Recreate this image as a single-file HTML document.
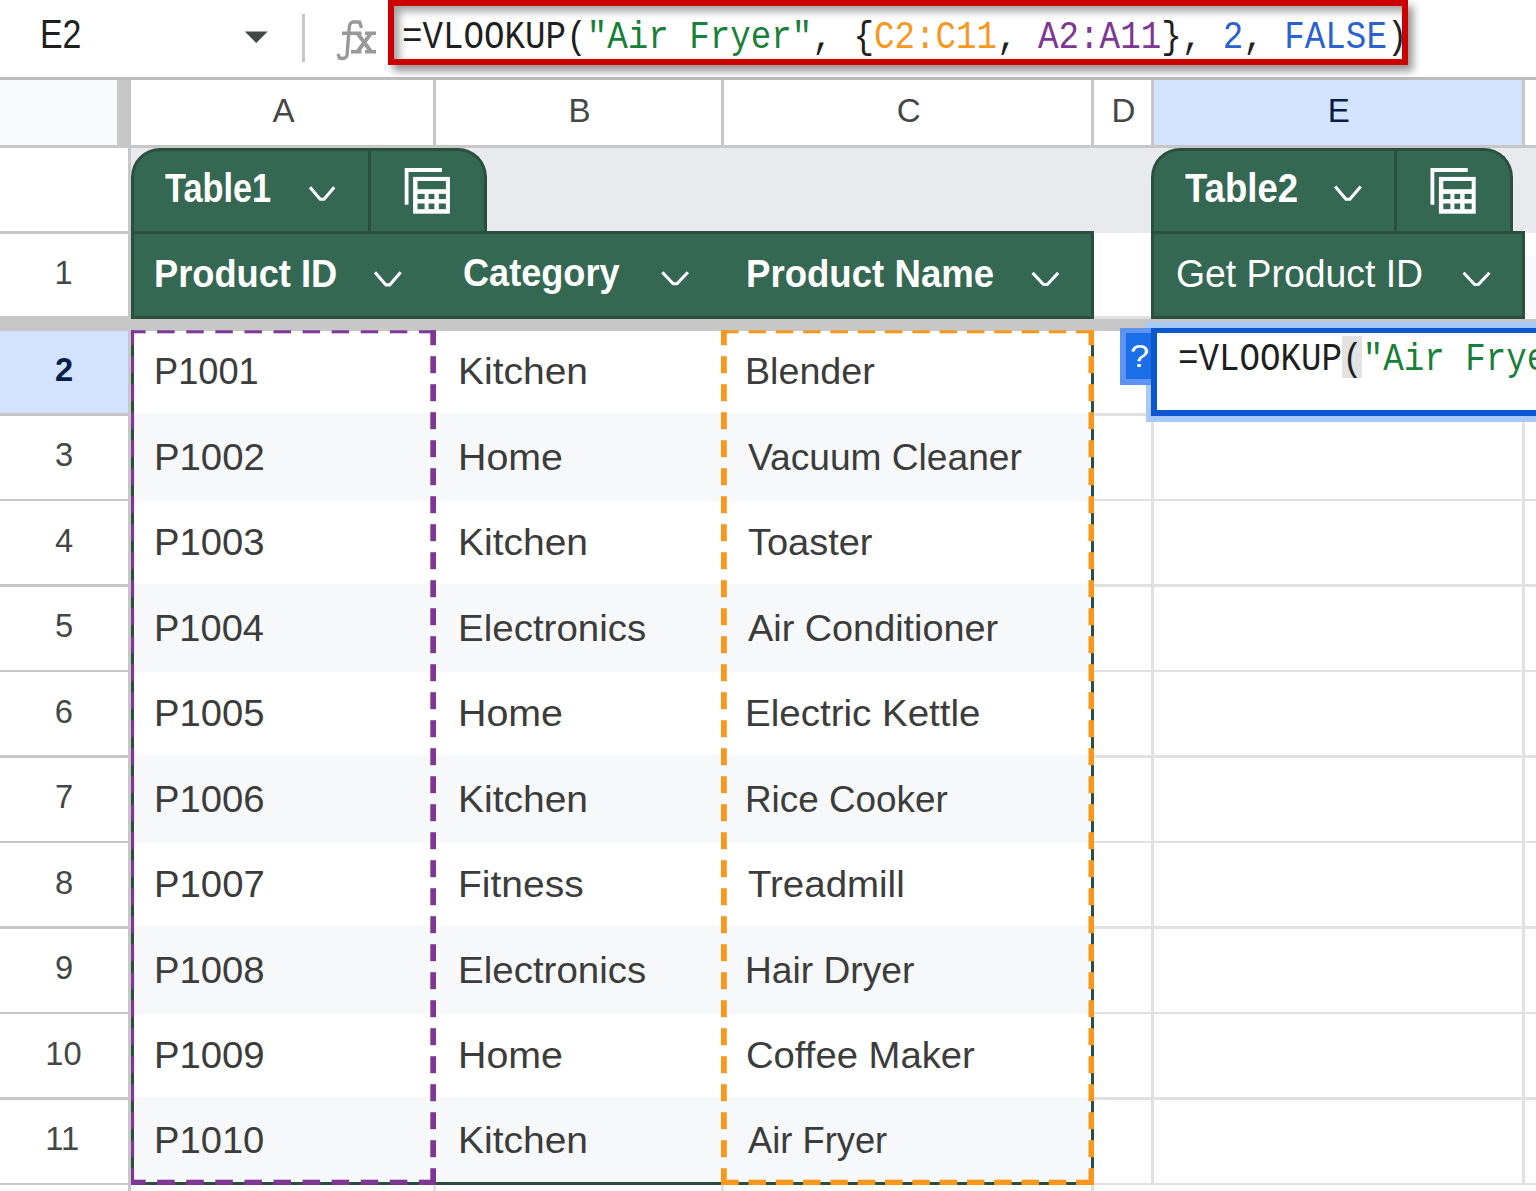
<!DOCTYPE html><html><head><meta charset="utf-8"><style>
html,body{margin:0;padding:0;background:#fff;width:1536px;height:1191px;overflow:hidden;position:relative}
body>div,body>svg{position:absolute}
.t{white-space:pre}
</style></head><body>
<div style="left:0.00px;top:80.00px;width:117.00px;height:65.00px;background:#f8f9fa;"></div>
<div style="left:1154.00px;top:80.00px;width:368.00px;height:65.00px;background:#d3e3fd;"></div>
<div style="left:0.00px;top:77.00px;width:1536.00px;height:3.00px;background:#bdbdbd;"></div>
<div style="left:0.00px;top:145.00px;width:1536.00px;height:3.00px;background:#c7c7c7;"></div>
<div style="left:117.00px;top:80.00px;width:14.00px;height:65.00px;background:#c7c7c7;"></div>
<div style="left:433.00px;top:80.00px;width:3.00px;height:65.00px;background:#c7c7c7;"></div>
<div style="left:721.00px;top:80.00px;width:3.00px;height:65.00px;background:#c7c7c7;"></div>
<div style="left:1091.00px;top:80.00px;width:3.00px;height:65.00px;background:#c7c7c7;"></div>
<div style="left:1151.00px;top:80.00px;width:3.00px;height:65.00px;background:#c7c7c7;"></div>
<div style="left:1522.00px;top:80.00px;width:3.00px;height:65.00px;background:#c7c7c7;"></div>
<div class="t" style="left:272.46px;top:94.37px;font:normal 400 33.10px/33.10px 'Liberation Sans', sans-serif;color:#444746;">A</div>
<div class="t" style="left:568.48px;top:94.37px;font:normal 400 33.10px/33.10px 'Liberation Sans', sans-serif;color:#444746;">B</div>
<div class="t" style="left:896.84px;top:94.37px;font:normal 400 33.10px/33.10px 'Liberation Sans', sans-serif;color:#444746;">C</div>
<div class="t" style="left:1111.48px;top:94.37px;font:normal 400 33.10px/33.10px 'Liberation Sans', sans-serif;color:#444746;">D</div>
<div class="t" style="left:1327.81px;top:94.37px;font:normal 400 33.10px/33.10px 'Liberation Sans', sans-serif;color:#041e49;">E</div>
<div style="left:128.00px;top:148.00px;width:3.00px;height:1043.00px;background:#c7c7c7;"></div>
<div style="left:0.00px;top:330.50px;width:128.00px;height:82.50px;background:#d3e3fd;"></div>
<div style="left:0.00px;top:231.00px;width:128.00px;height:3.00px;background:#c7c7c7;"></div>
<div style="left:0.00px;top:316.00px;width:128.00px;height:15.00px;background:#c7c7c7;"></div>
<div style="left:0.00px;top:413.00px;width:128.00px;height:2.70px;background:#c7c7c7;"></div>
<div style="left:0.00px;top:498.50px;width:128.00px;height:2.70px;background:#c7c7c7;"></div>
<div style="left:0.00px;top:584.00px;width:128.00px;height:2.70px;background:#c7c7c7;"></div>
<div style="left:0.00px;top:669.50px;width:128.00px;height:2.70px;background:#c7c7c7;"></div>
<div style="left:0.00px;top:755.00px;width:128.00px;height:2.70px;background:#c7c7c7;"></div>
<div style="left:0.00px;top:840.50px;width:128.00px;height:2.70px;background:#c7c7c7;"></div>
<div style="left:0.00px;top:926.00px;width:128.00px;height:2.70px;background:#c7c7c7;"></div>
<div style="left:0.00px;top:1011.50px;width:128.00px;height:2.70px;background:#c7c7c7;"></div>
<div style="left:0.00px;top:1097.00px;width:128.00px;height:2.70px;background:#c7c7c7;"></div>
<div style="left:0.00px;top:1182.50px;width:128.00px;height:2.70px;background:#c7c7c7;"></div>
<div class="t" style="left:54.46px;top:257.21px;font:normal 400 32.70px/32.70px 'Liberation Sans', sans-serif;color:#444746;">1</div>
<div class="t" style="left:54.99px;top:353.61px;font:normal 700 32.70px/32.70px 'Liberation Sans', sans-serif;color:#041e49;">2</div>
<div class="t" style="left:55.00px;top:439.11px;font:normal 400 32.70px/32.70px 'Liberation Sans', sans-serif;color:#444746;">3</div>
<div class="t" style="left:55.01px;top:524.61px;font:normal 400 32.70px/32.70px 'Liberation Sans', sans-serif;color:#444746;">4</div>
<div class="t" style="left:54.94px;top:610.11px;font:normal 400 32.70px/32.70px 'Liberation Sans', sans-serif;color:#444746;">5</div>
<div class="t" style="left:54.80px;top:695.61px;font:normal 400 32.70px/32.70px 'Liberation Sans', sans-serif;color:#444746;">6</div>
<div class="t" style="left:54.89px;top:781.11px;font:normal 400 32.70px/32.70px 'Liberation Sans', sans-serif;color:#444746;">7</div>
<div class="t" style="left:54.91px;top:866.61px;font:normal 400 32.70px/32.70px 'Liberation Sans', sans-serif;color:#444746;">8</div>
<div class="t" style="left:54.91px;top:952.11px;font:normal 400 32.70px/32.70px 'Liberation Sans', sans-serif;color:#444746;">9</div>
<div class="t" style="left:45.21px;top:1037.61px;font:normal 400 32.70px/32.70px 'Liberation Sans', sans-serif;color:#444746;">10</div>
<div class="t" style="left:45.37px;top:1123.11px;font:normal 400 32.70px/32.70px 'Liberation Sans', sans-serif;color:#444746;">11</div>
<div style="left:1094.00px;top:413.00px;width:442.00px;height:2.70px;background:#e1e1e1;"></div>
<div style="left:1094.00px;top:498.50px;width:442.00px;height:2.70px;background:#e1e1e1;"></div>
<div style="left:1094.00px;top:584.00px;width:442.00px;height:2.70px;background:#e1e1e1;"></div>
<div style="left:1094.00px;top:669.50px;width:442.00px;height:2.70px;background:#e1e1e1;"></div>
<div style="left:1094.00px;top:755.00px;width:442.00px;height:2.70px;background:#e1e1e1;"></div>
<div style="left:1094.00px;top:840.50px;width:442.00px;height:2.70px;background:#e1e1e1;"></div>
<div style="left:1094.00px;top:926.00px;width:442.00px;height:2.70px;background:#e1e1e1;"></div>
<div style="left:1094.00px;top:1011.50px;width:442.00px;height:2.70px;background:#e1e1e1;"></div>
<div style="left:1094.00px;top:1097.00px;width:442.00px;height:2.70px;background:#e1e1e1;"></div>
<div style="left:1094.00px;top:1182.50px;width:442.00px;height:2.70px;background:#e1e1e1;"></div>
<div style="left:1151.00px;top:330.00px;width:3.00px;height:861.00px;background:#e1e1e1;"></div>
<div style="left:1522.00px;top:330.00px;width:3.00px;height:861.00px;background:#e1e1e1;"></div>
<div style="left:131.00px;top:1185.00px;width:1405.00px;height:6.00px;background:#fff;"></div>
<div style="left:433.00px;top:1185.00px;width:3.00px;height:6.00px;background:#e1e1e1;"></div>
<div style="left:721.00px;top:1185.00px;width:3.00px;height:6.00px;background:#e1e1e1;"></div>
<div style="left:1091.00px;top:1185.00px;width:3.00px;height:6.00px;background:#e1e1e1;"></div>
<div style="left:131.00px;top:148.00px;width:1405.00px;height:85.00px;background:#e8eaed;"></div>
<div style="left:1094.00px;top:233.00px;width:57.00px;height:83.00px;background:#fff;"></div>
<div style="left:1094.00px;top:316.00px;width:57.00px;height:3.00px;background:#e1e1e1;"></div>
<div style="left:1525.00px;top:233.00px;width:11.00px;height:23.00px;background:#fff;"></div>
<div style="left:1525.00px;top:256.00px;width:11.00px;height:62.00px;background:#f8f9fa;"></div>
<div style="left:0.00px;top:318.50px;width:1536.00px;height:12.00px;background:#c7c7c7;"></div>
<div style="left:131px;top:148px;width:350px;height:80px;background:#356853;border:3px solid #2a4f3f;border-bottom:none;border-radius:29px 29px 0 0"></div>
<div style="left:368.00px;top:151.00px;width:3.00px;height:80.00px;background:#2a4f3f;"></div>
<div style="left:131.00px;top:231.00px;width:963.00px;height:88.00px;background:#2a4f3f;"></div>
<div style="left:134.00px;top:234.00px;width:957.00px;height:82.00px;background:#356853;"></div>
<div style="left:131.00px;top:330.50px;width:963.00px;height:854.50px;background:#2a4f3f;"></div>
<div style="left:134.00px;top:330.50px;width:957.00px;height:851.50px;background:#fff;"></div>
<div style="left:134.00px;top:413.00px;width:957.00px;height:88.30px;background:#f6f8fa;"></div>
<div style="left:134.00px;top:584.00px;width:957.00px;height:88.30px;background:#f6f8fa;"></div>
<div style="left:134.00px;top:755.00px;width:957.00px;height:88.30px;background:#f6f8fa;"></div>
<div style="left:134.00px;top:926.00px;width:957.00px;height:88.30px;background:#f6f8fa;"></div>
<div style="left:134.00px;top:1097.00px;width:957.00px;height:85.00px;background:#f6f8fa;"></div>
<div style="left:1151px;top:148px;width:356px;height:80px;background:#356853;border:3px solid #2a4f3f;border-bottom:none;border-radius:29px 29px 0 0"></div>
<div style="left:1393.50px;top:151.00px;width:3.00px;height:80.00px;background:#2a4f3f;"></div>
<div style="left:1151.00px;top:231.00px;width:374.00px;height:87.50px;background:#2a4f3f;"></div>
<div style="left:1154.00px;top:234.00px;width:368.00px;height:81.50px;background:#356853;"></div>
<div class="t" style="left:165.41px;top:167.55px;font:normal 700 40.80px/40.80px 'Liberation Sans', sans-serif;color:#ffffff;transform:scale(0.8413,1.0000);transform-origin:0 34.55px;">Table1</div>
<div class="t" style="left:1184.79px;top:167.75px;font:normal 700 40.80px/40.80px 'Liberation Sans', sans-serif;color:#ffffff;transform:scale(0.8957,1.0000);transform-origin:0 34.55px;">Table2</div>
<div class="t" style="left:154.08px;top:255.29px;font:normal 700 38.40px/38.40px 'Liberation Sans', sans-serif;color:#ffffff;transform:scale(0.9439,1.0000);transform-origin:0 32.51px;">Product ID</div>
<div class="t" style="left:462.92px;top:254.49px;font:normal 700 38.40px/38.40px 'Liberation Sans', sans-serif;color:#ffffff;transform:scale(0.9407,1.0000);transform-origin:0 32.51px;">Category</div>
<div class="t" style="left:746.45px;top:255.09px;font:normal 700 38.40px/38.40px 'Liberation Sans', sans-serif;color:#ffffff;transform:scale(0.9534,1.0000);transform-origin:0 32.51px;">Product Name</div>
<div class="t" style="left:1175.82px;top:255.09px;font:normal 400 38.40px/38.40px 'Liberation Sans', sans-serif;color:#ffffff;transform:scale(0.9732,1.0000);transform-origin:0 32.51px;">Get Product ID</div>
<svg style="left:0;top:0" width="1536" height="1191" viewBox="0 0 1536 1191"><polyline points="310.0,187.3 320.2,199.2 324.0,199.2 334.2,187.3" fill="none" stroke="#fff" stroke-width="3.1" stroke-linecap="butt" stroke-linejoin="round"/><polyline points="1335.2,186.6 1346.0,199.2 1349.8,199.2 1360.7,186.6" fill="none" stroke="#fff" stroke-width="3.1" stroke-linecap="butt" stroke-linejoin="round"/><polyline points="375.0,272.3 385.9,284.9 389.7,284.9 400.6,272.3" fill="none" stroke="#fff" stroke-width="3.1" stroke-linecap="butt" stroke-linejoin="round"/><polyline points="662.3,272.2 673.2,283.7 677.0,283.7 687.9,272.2" fill="none" stroke="#fff" stroke-width="3.1" stroke-linecap="butt" stroke-linejoin="round"/><polyline points="1032.6,272.9 1043.5,284.5 1047.3,284.5 1058.2,272.9" fill="none" stroke="#fff" stroke-width="3.1" stroke-linecap="butt" stroke-linejoin="round"/><polyline points="1463.6,272.7 1474.6,284.5 1478.4,284.5 1489.4,272.7" fill="none" stroke="#fff" stroke-width="3.1" stroke-linecap="butt" stroke-linejoin="round"/><polyline points="406.6,204.8 406.6,170 441.9,170" fill="none" stroke="#fff" stroke-width="3.8"/><rect x="413.1" y="176.9" width="36.8" height="36.8" fill="#fff"/><rect x="417.5" y="181" width="28.4" height="8.2" fill="#356853"/><rect x="417.5" y="193.9" width="7.1" height="5.2" fill="#356853"/><rect x="417.5" y="203.5" width="7.1" height="5.7" fill="#356853"/><rect x="428.6" y="193.9" width="5.8" height="5.2" fill="#356853"/><rect x="428.6" y="203.5" width="5.8" height="5.7" fill="#356853"/><rect x="438.8" y="193.9" width="7.1" height="5.2" fill="#356853"/><rect x="438.8" y="203.5" width="7.1" height="5.7" fill="#356853"/><polyline points="1432.4,204.8 1432.4,170 1467.7,170" fill="none" stroke="#fff" stroke-width="3.8"/><rect x="1438.9" y="176.9" width="36.8" height="36.8" fill="#fff"/><rect x="1443.3" y="181" width="28.4" height="8.2" fill="#356853"/><rect x="1443.3" y="193.9" width="7.1" height="5.2" fill="#356853"/><rect x="1443.3" y="203.5" width="7.1" height="5.7" fill="#356853"/><rect x="1454.4" y="193.9" width="5.8" height="5.2" fill="#356853"/><rect x="1454.4" y="203.5" width="5.8" height="5.7" fill="#356853"/><rect x="1464.6" y="193.9" width="7.1" height="5.2" fill="#356853"/><rect x="1464.6" y="203.5" width="7.1" height="5.7" fill="#356853"/><rect x="131" y="330.30" width="3.10" height="14.90" fill="#7e3794"/><rect x="131" y="356.20" width="3.10" height="17.00" fill="#7e3794"/><rect x="131" y="384.20" width="3.10" height="17.00" fill="#7e3794"/><rect x="131" y="412.20" width="3.10" height="17.00" fill="#7e3794"/><rect x="131" y="440.20" width="3.10" height="17.00" fill="#7e3794"/><rect x="131" y="468.20" width="3.10" height="17.00" fill="#7e3794"/><rect x="131" y="496.20" width="3.10" height="17.00" fill="#7e3794"/><rect x="131" y="524.20" width="3.10" height="17.00" fill="#7e3794"/><rect x="131" y="552.20" width="3.10" height="17.00" fill="#7e3794"/><rect x="131" y="580.20" width="3.10" height="17.00" fill="#7e3794"/><rect x="131" y="608.20" width="3.10" height="17.00" fill="#7e3794"/><rect x="131" y="636.20" width="3.10" height="17.00" fill="#7e3794"/><rect x="131" y="664.20" width="3.10" height="17.00" fill="#7e3794"/><rect x="131" y="692.20" width="3.10" height="17.00" fill="#7e3794"/><rect x="131" y="720.20" width="3.10" height="17.00" fill="#7e3794"/><rect x="131" y="748.20" width="3.10" height="17.00" fill="#7e3794"/><rect x="131" y="776.20" width="3.10" height="17.00" fill="#7e3794"/><rect x="131" y="804.20" width="3.10" height="17.00" fill="#7e3794"/><rect x="131" y="832.20" width="3.10" height="17.00" fill="#7e3794"/><rect x="131" y="860.20" width="3.10" height="17.00" fill="#7e3794"/><rect x="131" y="888.20" width="3.10" height="17.00" fill="#7e3794"/><rect x="131" y="916.20" width="3.10" height="17.00" fill="#7e3794"/><rect x="131" y="944.20" width="3.10" height="17.00" fill="#7e3794"/><rect x="131" y="972.20" width="3.10" height="17.00" fill="#7e3794"/><rect x="131" y="1000.20" width="3.10" height="17.00" fill="#7e3794"/><rect x="131" y="1028.20" width="3.10" height="17.00" fill="#7e3794"/><rect x="131" y="1056.20" width="3.10" height="17.00" fill="#7e3794"/><rect x="131" y="1084.20" width="3.10" height="17.00" fill="#7e3794"/><rect x="131" y="1112.20" width="3.10" height="17.00" fill="#7e3794"/><rect x="131" y="1140.20" width="3.10" height="17.00" fill="#7e3794"/><rect x="131" y="1168.20" width="3.10" height="16.80" fill="#7e3794"/><rect x="430.3" y="330.30" width="5.70" height="14.90" fill="#7e3794"/><rect x="430.3" y="356.20" width="5.70" height="17.00" fill="#7e3794"/><rect x="430.3" y="384.20" width="5.70" height="17.00" fill="#7e3794"/><rect x="430.3" y="412.20" width="5.70" height="17.00" fill="#7e3794"/><rect x="430.3" y="440.20" width="5.70" height="17.00" fill="#7e3794"/><rect x="430.3" y="468.20" width="5.70" height="17.00" fill="#7e3794"/><rect x="430.3" y="496.20" width="5.70" height="17.00" fill="#7e3794"/><rect x="430.3" y="524.20" width="5.70" height="17.00" fill="#7e3794"/><rect x="430.3" y="552.20" width="5.70" height="17.00" fill="#7e3794"/><rect x="430.3" y="580.20" width="5.70" height="17.00" fill="#7e3794"/><rect x="430.3" y="608.20" width="5.70" height="17.00" fill="#7e3794"/><rect x="430.3" y="636.20" width="5.70" height="17.00" fill="#7e3794"/><rect x="430.3" y="664.20" width="5.70" height="17.00" fill="#7e3794"/><rect x="430.3" y="692.20" width="5.70" height="17.00" fill="#7e3794"/><rect x="430.3" y="720.20" width="5.70" height="17.00" fill="#7e3794"/><rect x="430.3" y="748.20" width="5.70" height="17.00" fill="#7e3794"/><rect x="430.3" y="776.20" width="5.70" height="17.00" fill="#7e3794"/><rect x="430.3" y="804.20" width="5.70" height="17.00" fill="#7e3794"/><rect x="430.3" y="832.20" width="5.70" height="17.00" fill="#7e3794"/><rect x="430.3" y="860.20" width="5.70" height="17.00" fill="#7e3794"/><rect x="430.3" y="888.20" width="5.70" height="17.00" fill="#7e3794"/><rect x="430.3" y="916.20" width="5.70" height="17.00" fill="#7e3794"/><rect x="430.3" y="944.20" width="5.70" height="17.00" fill="#7e3794"/><rect x="430.3" y="972.20" width="5.70" height="17.00" fill="#7e3794"/><rect x="430.3" y="1000.20" width="5.70" height="17.00" fill="#7e3794"/><rect x="430.3" y="1028.20" width="5.70" height="17.00" fill="#7e3794"/><rect x="430.3" y="1056.20" width="5.70" height="17.00" fill="#7e3794"/><rect x="430.3" y="1084.20" width="5.70" height="17.00" fill="#7e3794"/><rect x="430.3" y="1112.20" width="5.70" height="17.00" fill="#7e3794"/><rect x="430.3" y="1140.20" width="5.70" height="17.00" fill="#7e3794"/><rect x="430.3" y="1168.20" width="5.70" height="16.80" fill="#7e3794"/><rect x="131.00" y="330.3" width="14.60" height="3.00" fill="#7e3794"/><rect x="157.18" y="330.3" width="17.50" height="3.00" fill="#7e3794"/><rect x="186.26" y="330.3" width="17.50" height="3.00" fill="#7e3794"/><rect x="215.34" y="330.3" width="17.50" height="3.00" fill="#7e3794"/><rect x="244.42" y="330.3" width="17.50" height="3.00" fill="#7e3794"/><rect x="273.50" y="330.3" width="17.50" height="3.00" fill="#7e3794"/><rect x="302.58" y="330.3" width="17.50" height="3.00" fill="#7e3794"/><rect x="331.66" y="330.3" width="17.50" height="3.00" fill="#7e3794"/><rect x="360.74" y="330.3" width="17.50" height="3.00" fill="#7e3794"/><rect x="389.82" y="330.3" width="17.50" height="3.00" fill="#7e3794"/><rect x="418.90" y="330.3" width="17.10" height="3.00" fill="#7e3794"/><rect x="131.00" y="1179.7" width="14.60" height="5.30" fill="#7e3794"/><rect x="157.18" y="1179.7" width="17.50" height="5.30" fill="#7e3794"/><rect x="186.26" y="1179.7" width="17.50" height="5.30" fill="#7e3794"/><rect x="215.34" y="1179.7" width="17.50" height="5.30" fill="#7e3794"/><rect x="244.42" y="1179.7" width="17.50" height="5.30" fill="#7e3794"/><rect x="273.50" y="1179.7" width="17.50" height="5.30" fill="#7e3794"/><rect x="302.58" y="1179.7" width="17.50" height="5.30" fill="#7e3794"/><rect x="331.66" y="1179.7" width="17.50" height="5.30" fill="#7e3794"/><rect x="360.74" y="1179.7" width="17.50" height="5.30" fill="#7e3794"/><rect x="389.82" y="1179.7" width="17.50" height="5.30" fill="#7e3794"/><rect x="418.90" y="1179.7" width="17.10" height="5.30" fill="#7e3794"/><rect x="721" y="330.30" width="5.80" height="14.90" fill="#f7981d"/><rect x="721" y="356.20" width="5.80" height="17.00" fill="#f7981d"/><rect x="721" y="384.20" width="5.80" height="17.00" fill="#f7981d"/><rect x="721" y="412.20" width="5.80" height="17.00" fill="#f7981d"/><rect x="721" y="440.20" width="5.80" height="17.00" fill="#f7981d"/><rect x="721" y="468.20" width="5.80" height="17.00" fill="#f7981d"/><rect x="721" y="496.20" width="5.80" height="17.00" fill="#f7981d"/><rect x="721" y="524.20" width="5.80" height="17.00" fill="#f7981d"/><rect x="721" y="552.20" width="5.80" height="17.00" fill="#f7981d"/><rect x="721" y="580.20" width="5.80" height="17.00" fill="#f7981d"/><rect x="721" y="608.20" width="5.80" height="17.00" fill="#f7981d"/><rect x="721" y="636.20" width="5.80" height="17.00" fill="#f7981d"/><rect x="721" y="664.20" width="5.80" height="17.00" fill="#f7981d"/><rect x="721" y="692.20" width="5.80" height="17.00" fill="#f7981d"/><rect x="721" y="720.20" width="5.80" height="17.00" fill="#f7981d"/><rect x="721" y="748.20" width="5.80" height="17.00" fill="#f7981d"/><rect x="721" y="776.20" width="5.80" height="17.00" fill="#f7981d"/><rect x="721" y="804.20" width="5.80" height="17.00" fill="#f7981d"/><rect x="721" y="832.20" width="5.80" height="17.00" fill="#f7981d"/><rect x="721" y="860.20" width="5.80" height="17.00" fill="#f7981d"/><rect x="721" y="888.20" width="5.80" height="17.00" fill="#f7981d"/><rect x="721" y="916.20" width="5.80" height="17.00" fill="#f7981d"/><rect x="721" y="944.20" width="5.80" height="17.00" fill="#f7981d"/><rect x="721" y="972.20" width="5.80" height="17.00" fill="#f7981d"/><rect x="721" y="1000.20" width="5.80" height="17.00" fill="#f7981d"/><rect x="721" y="1028.20" width="5.80" height="17.00" fill="#f7981d"/><rect x="721" y="1056.20" width="5.80" height="17.00" fill="#f7981d"/><rect x="721" y="1084.20" width="5.80" height="17.00" fill="#f7981d"/><rect x="721" y="1112.20" width="5.80" height="17.00" fill="#f7981d"/><rect x="721" y="1140.20" width="5.80" height="17.00" fill="#f7981d"/><rect x="721" y="1168.20" width="5.80" height="16.80" fill="#f7981d"/><rect x="1088.5" y="330.30" width="5.50" height="14.90" fill="#f7981d"/><rect x="1088.5" y="356.20" width="5.50" height="17.00" fill="#f7981d"/><rect x="1088.5" y="384.20" width="5.50" height="17.00" fill="#f7981d"/><rect x="1088.5" y="412.20" width="5.50" height="17.00" fill="#f7981d"/><rect x="1088.5" y="440.20" width="5.50" height="17.00" fill="#f7981d"/><rect x="1088.5" y="468.20" width="5.50" height="17.00" fill="#f7981d"/><rect x="1088.5" y="496.20" width="5.50" height="17.00" fill="#f7981d"/><rect x="1088.5" y="524.20" width="5.50" height="17.00" fill="#f7981d"/><rect x="1088.5" y="552.20" width="5.50" height="17.00" fill="#f7981d"/><rect x="1088.5" y="580.20" width="5.50" height="17.00" fill="#f7981d"/><rect x="1088.5" y="608.20" width="5.50" height="17.00" fill="#f7981d"/><rect x="1088.5" y="636.20" width="5.50" height="17.00" fill="#f7981d"/><rect x="1088.5" y="664.20" width="5.50" height="17.00" fill="#f7981d"/><rect x="1088.5" y="692.20" width="5.50" height="17.00" fill="#f7981d"/><rect x="1088.5" y="720.20" width="5.50" height="17.00" fill="#f7981d"/><rect x="1088.5" y="748.20" width="5.50" height="17.00" fill="#f7981d"/><rect x="1088.5" y="776.20" width="5.50" height="17.00" fill="#f7981d"/><rect x="1088.5" y="804.20" width="5.50" height="17.00" fill="#f7981d"/><rect x="1088.5" y="832.20" width="5.50" height="17.00" fill="#f7981d"/><rect x="1088.5" y="860.20" width="5.50" height="17.00" fill="#f7981d"/><rect x="1088.5" y="888.20" width="5.50" height="17.00" fill="#f7981d"/><rect x="1088.5" y="916.20" width="5.50" height="17.00" fill="#f7981d"/><rect x="1088.5" y="944.20" width="5.50" height="17.00" fill="#f7981d"/><rect x="1088.5" y="972.20" width="5.50" height="17.00" fill="#f7981d"/><rect x="1088.5" y="1000.20" width="5.50" height="17.00" fill="#f7981d"/><rect x="1088.5" y="1028.20" width="5.50" height="17.00" fill="#f7981d"/><rect x="1088.5" y="1056.20" width="5.50" height="17.00" fill="#f7981d"/><rect x="1088.5" y="1084.20" width="5.50" height="17.00" fill="#f7981d"/><rect x="1088.5" y="1112.20" width="5.50" height="17.00" fill="#f7981d"/><rect x="1088.5" y="1140.20" width="5.50" height="17.00" fill="#f7981d"/><rect x="1088.5" y="1168.20" width="5.50" height="16.80" fill="#f7981d"/><rect x="721.20" y="330.3" width="17.50" height="3.00" fill="#f7981d"/><rect x="748.50" y="330.3" width="17.50" height="3.00" fill="#f7981d"/><rect x="775.80" y="330.3" width="17.50" height="3.00" fill="#f7981d"/><rect x="803.10" y="330.3" width="17.50" height="3.00" fill="#f7981d"/><rect x="830.40" y="330.3" width="17.50" height="3.00" fill="#f7981d"/><rect x="857.70" y="330.3" width="17.50" height="3.00" fill="#f7981d"/><rect x="885.00" y="330.3" width="17.50" height="3.00" fill="#f7981d"/><rect x="912.30" y="330.3" width="17.50" height="3.00" fill="#f7981d"/><rect x="939.60" y="330.3" width="17.50" height="3.00" fill="#f7981d"/><rect x="966.90" y="330.3" width="17.50" height="3.00" fill="#f7981d"/><rect x="994.20" y="330.3" width="17.50" height="3.00" fill="#f7981d"/><rect x="1021.50" y="330.3" width="17.50" height="3.00" fill="#f7981d"/><rect x="1048.80" y="330.3" width="17.50" height="3.00" fill="#f7981d"/><rect x="1076.10" y="330.3" width="17.50" height="3.00" fill="#f7981d"/><rect x="721.20" y="1179.7" width="17.50" height="5.30" fill="#f7981d"/><rect x="748.50" y="1179.7" width="17.50" height="5.30" fill="#f7981d"/><rect x="775.80" y="1179.7" width="17.50" height="5.30" fill="#f7981d"/><rect x="803.10" y="1179.7" width="17.50" height="5.30" fill="#f7981d"/><rect x="830.40" y="1179.7" width="17.50" height="5.30" fill="#f7981d"/><rect x="857.70" y="1179.7" width="17.50" height="5.30" fill="#f7981d"/><rect x="885.00" y="1179.7" width="17.50" height="5.30" fill="#f7981d"/><rect x="912.30" y="1179.7" width="17.50" height="5.30" fill="#f7981d"/><rect x="939.60" y="1179.7" width="17.50" height="5.30" fill="#f7981d"/><rect x="966.90" y="1179.7" width="17.50" height="5.30" fill="#f7981d"/><rect x="994.20" y="1179.7" width="17.50" height="5.30" fill="#f7981d"/><rect x="1021.50" y="1179.7" width="17.50" height="5.30" fill="#f7981d"/><rect x="1048.80" y="1179.7" width="17.50" height="5.30" fill="#f7981d"/><rect x="1076.10" y="1179.7" width="17.50" height="5.30" fill="#f7981d"/></svg>
<div class="t" style="left:153.73px;top:353.47px;font:normal 400 37.00px/37.00px 'Liberation Sans', sans-serif;color:#3c3c3c;transform:scale(0.9790,1.0000);transform-origin:0 31.33px;">P1001</div>
<div class="t" style="left:458.00px;top:353.47px;font:normal 400 37.00px/37.00px 'Liberation Sans', sans-serif;color:#3c3c3c;transform:scale(1.0536,1.0000);transform-origin:0 31.33px;">Kitchen</div>
<div class="t" style="left:745.31px;top:353.47px;font:normal 400 37.00px/37.00px 'Liberation Sans', sans-serif;color:#3c3c3c;transform:scale(1.0171,1.0000);transform-origin:0 31.33px;">Blender</div>
<div class="t" style="left:153.56px;top:438.91px;font:normal 400 37.00px/37.00px 'Liberation Sans', sans-serif;color:#3c3c3c;transform:scale(1.0353,1.0000);transform-origin:0 31.33px;">P1002</div>
<div class="t" style="left:457.97px;top:438.91px;font:normal 400 37.00px/37.00px 'Liberation Sans', sans-serif;color:#3c3c3c;transform:scale(1.0636,1.0000);transform-origin:0 31.33px;">Home</div>
<div class="t" style="left:748.24px;top:438.91px;font:normal 400 37.00px/37.00px 'Liberation Sans', sans-serif;color:#3c3c3c;transform:scale(1.0036,1.0000);transform-origin:0 31.33px;">Vacuum Cleaner</div>
<div class="t" style="left:153.56px;top:524.35px;font:normal 400 37.00px/37.00px 'Liberation Sans', sans-serif;color:#3c3c3c;transform:scale(1.0330,1.0000);transform-origin:0 31.33px;">P1003</div>
<div class="t" style="left:458.00px;top:524.35px;font:normal 400 37.00px/37.00px 'Liberation Sans', sans-serif;color:#3c3c3c;transform:scale(1.0536,1.0000);transform-origin:0 31.33px;">Kitchen</div>
<div class="t" style="left:747.55px;top:524.35px;font:normal 400 37.00px/37.00px 'Liberation Sans', sans-serif;color:#3c3c3c;transform:scale(1.0259,1.0000);transform-origin:0 31.33px;">Toaster</div>
<div class="t" style="left:153.58px;top:609.79px;font:normal 400 37.00px/37.00px 'Liberation Sans', sans-serif;color:#3c3c3c;transform:scale(1.0275,1.0000);transform-origin:0 31.33px;">P1004</div>
<div class="t" style="left:458.04px;top:609.79px;font:normal 400 37.00px/37.00px 'Liberation Sans', sans-serif;color:#3c3c3c;transform:scale(1.0403,1.0000);transform-origin:0 31.33px;">Electronics</div>
<div class="t" style="left:748.33px;top:609.79px;font:normal 400 37.00px/37.00px 'Liberation Sans', sans-serif;color:#3c3c3c;transform:scale(1.0224,1.0000);transform-origin:0 31.33px;">Air Conditioner</div>
<div class="t" style="left:153.57px;top:695.23px;font:normal 400 37.00px/37.00px 'Liberation Sans', sans-serif;color:#3c3c3c;transform:scale(1.0322,1.0000);transform-origin:0 31.33px;">P1005</div>
<div class="t" style="left:457.97px;top:695.23px;font:normal 400 37.00px/37.00px 'Liberation Sans', sans-serif;color:#3c3c3c;transform:scale(1.0636,1.0000);transform-origin:0 31.33px;">Home</div>
<div class="t" style="left:745.24px;top:695.23px;font:normal 400 37.00px/37.00px 'Liberation Sans', sans-serif;color:#3c3c3c;transform:scale(1.0410,1.0000);transform-origin:0 31.33px;">Electric Kettle</div>
<div class="t" style="left:153.56px;top:780.67px;font:normal 400 37.00px/37.00px 'Liberation Sans', sans-serif;color:#3c3c3c;transform:scale(1.0330,1.0000);transform-origin:0 31.33px;">P1006</div>
<div class="t" style="left:458.00px;top:780.67px;font:normal 400 37.00px/37.00px 'Liberation Sans', sans-serif;color:#3c3c3c;transform:scale(1.0536,1.0000);transform-origin:0 31.33px;">Kitchen</div>
<div class="t" style="left:745.38px;top:780.67px;font:normal 400 37.00px/37.00px 'Liberation Sans', sans-serif;color:#3c3c3c;transform:scale(0.9959,1.0000);transform-origin:0 31.33px;">Rice Cooker</div>
<div class="t" style="left:153.56px;top:866.11px;font:normal 400 37.00px/37.00px 'Liberation Sans', sans-serif;color:#3c3c3c;transform:scale(1.0353,1.0000);transform-origin:0 31.33px;">P1007</div>
<div class="t" style="left:458.00px;top:866.11px;font:normal 400 37.00px/37.00px 'Liberation Sans', sans-serif;color:#3c3c3c;transform:scale(1.0541,1.0000);transform-origin:0 31.33px;">Fitness</div>
<div class="t" style="left:747.54px;top:866.11px;font:normal 400 37.00px/37.00px 'Liberation Sans', sans-serif;color:#3c3c3c;transform:scale(1.0394,1.0000);transform-origin:0 31.33px;">Treadmill</div>
<div class="t" style="left:153.57px;top:951.55px;font:normal 400 37.00px/37.00px 'Liberation Sans', sans-serif;color:#3c3c3c;transform:scale(1.0328,1.0000);transform-origin:0 31.33px;">P1008</div>
<div class="t" style="left:458.04px;top:951.55px;font:normal 400 37.00px/37.00px 'Liberation Sans', sans-serif;color:#3c3c3c;transform:scale(1.0403,1.0000);transform-origin:0 31.33px;">Electronics</div>
<div class="t" style="left:745.35px;top:951.55px;font:normal 400 37.00px/37.00px 'Liberation Sans', sans-serif;color:#3c3c3c;transform:scale(1.0042,1.0000);transform-origin:0 31.33px;">Hair Dryer</div>
<div class="t" style="left:153.56px;top:1036.99px;font:normal 400 37.00px/37.00px 'Liberation Sans', sans-serif;color:#3c3c3c;transform:scale(1.0342,1.0000);transform-origin:0 31.33px;">P1009</div>
<div class="t" style="left:457.97px;top:1036.99px;font:normal 400 37.00px/37.00px 'Liberation Sans', sans-serif;color:#3c3c3c;transform:scale(1.0636,1.0000);transform-origin:0 31.33px;">Home</div>
<div class="t" style="left:746.46px;top:1036.99px;font:normal 400 37.00px/37.00px 'Liberation Sans', sans-serif;color:#3c3c3c;transform:scale(1.0333,1.0000);transform-origin:0 31.33px;">Coffee Maker</div>
<div class="t" style="left:153.57px;top:1122.43px;font:normal 400 37.00px/37.00px 'Liberation Sans', sans-serif;color:#3c3c3c;transform:scale(1.0311,1.0000);transform-origin:0 31.33px;">P1010</div>
<div class="t" style="left:458.00px;top:1122.43px;font:normal 400 37.00px/37.00px 'Liberation Sans', sans-serif;color:#3c3c3c;transform:scale(1.0536,1.0000);transform-origin:0 31.33px;">Kitchen</div>
<div class="t" style="left:748.33px;top:1122.43px;font:normal 400 37.00px/37.00px 'Liberation Sans', sans-serif;color:#3c3c3c;transform:scale(0.9813,1.0000);transform-origin:0 31.33px;">Air Fryer</div>
<div style="left:1146.00px;top:322.00px;width:390.00px;height:99.80px;background:#a8c7fa;"></div>
<div style="left:1151.20px;top:328.00px;width:384.80px;height:88.00px;background:#0b57d0;"></div>
<div style="left:1157.00px;top:333.20px;width:379.00px;height:76.80px;background:#fff;"></div>
<div style="left:1120.20px;top:328.00px;width:31.00px;height:56.60px;background:#5e93f1;"></div>
<div style="left:1125.50px;top:333.20px;width:25.70px;height:46.20px;background:#1b6ee6;"></div>
<div class="t" style="left:1129.79px;top:341.45px;font:normal 400 31.00px/31.00px 'Liberation Sans', sans-serif;color:#ffffff;transform:scale(1.1067,1.0000);transform-origin:0 26.25px;">?</div>
<div style="left:1342.00px;top:336.30px;width:20.00px;height:42.10px;background:#e2e2e2;"></div>
<div class="t" style="left:1178.00px;top:343.90px;font:400 34.194px/34.194px 'Liberation Mono', monospace;transform:scaleY(1.1188);transform-origin:0 26.20px"><span style="color:#1f1f1f">=VLOOKUP(</span><span style="color:#188038">"Air Fryer"</span><span style="color:#1f1f1f">, {</span><span style="color:#f7981d">C2:C11</span><span style="color:#1f1f1f">, </span><span style="color:#7e3794">A2:A11</span><span style="color:#1f1f1f">}, </span><span style="color:#2a62d0">2</span><span style="color:#1f1f1f">, </span><span style="color:#2a62d0">FALSE</span><span style="color:#1f1f1f">)</span></div>
<div style="left:0.00px;top:0.00px;width:1536.00px;height:77.00px;background:#fff;"></div>
<div class="t" style="left:40.02px;top:14.09px;font:normal 400 40.40px/40.40px 'Liberation Sans', sans-serif;color:#1f1f1f;transform:scale(0.8396,1.0000);transform-origin:0 34.21px;">E2</div>
<svg style="left:0;top:0" width="1536" height="80"><polygon points="244.8,31.5 267.7,31.5 256.25,43" fill="#444746"/></svg>
<div style="left:302.00px;top:14.20px;width:3.00px;height:48.30px;background:#c7c7c7;"></div>
<svg style="left:0;top:0" width="400" height="80"><g fill="none" stroke="#999" stroke-width="3.4"><path d="M361.5,28 L359.5,22 L352.5,22 Q349.5,23 349.2,28 L347,55.5 Q346,58.5 342,58.5 L339.5,58 L338,54"/><path d="M342,33.2 H361.5 M365,33.2 H376 M351,51.8 H361.5 M365,51.8 H376"/><path d="M358,34 L370.5,51 M370.5,34 L358,51" stroke-width="3.8"/></g></svg>
<div style="left:388px;top:0px;width:1008px;height:53px;border:6px solid #cc0000;background:#fff;box-shadow:5px 6px 8px rgba(0,0,0,0.42), inset 5px 5px 8px rgba(0,0,0,0.38);overflow:hidden"></div>
<div style="left:394px;top:6px;width:1008px;height:53px;overflow:hidden">
<div class="t" style="position:absolute;left:8.00px;top:16.10px;font:400 34.194px/34.194px 'Liberation Mono', monospace;transform:scaleY(1.1188);transform-origin:0 26.20px"><span style="color:#1f1f1f">=VLOOKUP(</span><span style="color:#188038">"Air Fryer"</span><span style="color:#1f1f1f">, {</span><span style="color:#f7981d">C2:C11</span><span style="color:#1f1f1f">, </span><span style="color:#7e3794">A2:A11</span><span style="color:#1f1f1f">}, </span><span style="color:#2a62d0">2</span><span style="color:#1f1f1f">, </span><span style="color:#2a62d0">FALSE</span><span style="color:#1f1f1f">)</span></div></div>
</body></html>
